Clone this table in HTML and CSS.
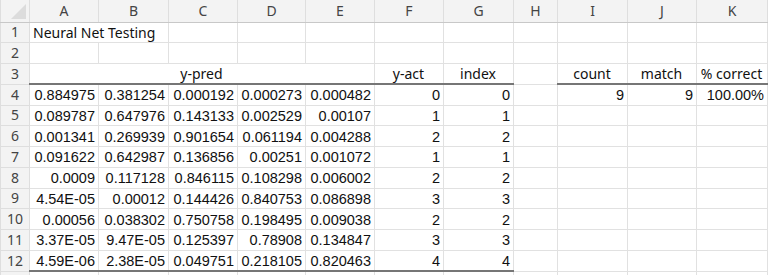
FILE: index.html
```html
<!DOCTYPE html>
<html lang="en">
<head>
    <meta charset="UTF-8">
    <title>Neural Net Testing</title>
    <link rel="stylesheet" href="styles.css">
</head>
<body>
    <table class="sheet">
        <colgroup>
            <col class="c-row"><col class="c-69"><col class="c-70"><col class="c-69"><col class="c-68"><col class="c-69"><col class="c-69"><col class="c-70"><col class="c-44"><col class="c-70"><col class="c-69"><col class="c-71">
        </colgroup>
        <thead>
            <tr class="col-head">
                <th class="corner"><span class="tri"></span></th>
                <th>A</th><th>B</th><th>C</th><th>D</th><th>E</th><th>F</th><th>G</th><th>H</th><th>I</th><th>J</th><th>K</th>
            </tr>
        </thead>
        <tbody>
            <tr>
                <th>1</th>
                <td class="title" colspan="2">Neural Net Testing</td>
                <td></td><td></td><td></td><td></td><td></td><td></td><td></td><td></td><td></td>
            </tr>
            <tr>
                <th>2</th>
                <td></td><td></td><td></td><td></td><td></td><td></td><td></td><td></td><td></td><td></td><td></td>
            </tr>
            <tr class="labels">
                <th>3</th>
                <td class="lbl rule" colspan="5">y-pred</td>
                <td class="lbl rule">y-act</td>
                <td class="lbl rule">index</td>
                <td></td>
                <td class="lbl rule">count</td>
                <td class="lbl rule">match</td>
                <td class="lbl rule">% correct</td>
            </tr>
            <tr>
                <th>4</th>
                <td>0.884975</td><td>0.381254</td><td>0.000192</td><td>0.000273</td><td>0.000482</td><td>0</td><td>0</td>
                <td></td><td>9</td><td>9</td><td>100.00%</td>
            </tr>
            <tr>
                <th>5</th>
                <td>0.089787</td><td>0.647976</td><td>0.143133</td><td>0.002529</td><td>0.00107</td><td>1</td><td>1</td>
                <td></td><td></td><td></td><td></td>
            </tr>
            <tr>
                <th>6</th>
                <td>0.001341</td><td>0.269939</td><td>0.901654</td><td>0.061194</td><td>0.004288</td><td>2</td><td>2</td>
                <td></td><td></td><td></td><td></td>
            </tr>
            <tr>
                <th>7</th>
                <td>0.091622</td><td>0.642987</td><td>0.136856</td><td>0.00251</td><td>0.001072</td><td>1</td><td>1</td>
                <td></td><td></td><td></td><td></td>
            </tr>
            <tr>
                <th>8</th>
                <td>0.0009</td><td>0.117128</td><td>0.846115</td><td>0.108298</td><td>0.006002</td><td>2</td><td>2</td>
                <td></td><td></td><td></td><td></td>
            </tr>
            <tr>
                <th>9</th>
                <td>4.54E-05</td><td>0.00012</td><td>0.144426</td><td>0.840753</td><td>0.086898</td><td>3</td><td>3</td>
                <td></td><td></td><td></td><td></td>
            </tr>
            <tr>
                <th>10</th>
                <td>0.00056</td><td>0.038302</td><td>0.750758</td><td>0.198495</td><td>0.009038</td><td>2</td><td>2</td>
                <td></td><td></td><td></td><td></td>
            </tr>
            <tr>
                <th>11</th>
                <td>3.37E-05</td><td>9.47E-05</td><td>0.125397</td><td>0.78908</td><td>0.134847</td><td>3</td><td>3</td>
                <td></td><td></td><td></td><td></td>
            </tr>
            <tr class="last">
                <th>12</th>
                <td class="rule">4.59E-06</td><td class="rule">2.38E-05</td><td class="rule">0.049751</td><td class="rule">0.218105</td><td class="rule">0.820463</td><td class="rule">4</td><td class="rule">4</td>
                <td></td><td></td><td></td><td></td>
            </tr>
            <tr class="tail">
                <th></th>
                <td></td><td></td><td></td><td></td><td></td><td></td><td></td><td></td><td></td><td></td><td></td>
            </tr>
        </tbody>
    </table>
</body>
</html>
```

FILE: styles.css
```css
* {
    margin: 0;
    padding: 0;
    box-sizing: border-box;
}

body {
    background: #fff;
    width: 768px;
    height: 275px;
    overflow: hidden;
}

.sheet {
    table-layout: fixed;
    border-collapse: collapse;
    width: 768px;
    font-family: 'Liberation Sans', Arial, sans-serif;
    font-size: 14.5px;
    color: #111;
}

.c-row { width: 29px; }
.c-44 { width: 44px; }
.c-68 { width: 68px; }
.c-69 { width: 69px; }
.c-70 { width: 70px; }
.c-71 { width: 71px; }

.sheet td,
.sheet th {
    height: 20.75px;
    border: 1px solid #e1e1e1;
    white-space: nowrap;
    overflow: hidden;
    line-height: 18px;
}

.sheet td {
    text-align: right;
    padding: 1px 3px 0 2px;
}

.sheet th {
    font-family: 'Noto Sans', 'Open Sans', sans-serif;
    font-weight: 400;
    font-size: 14px;
    color: #444;
    background: #f3f3f3;
    text-align: center;
    border-color: #dedede;
}

.col-head th {
    height: 22px;
    border-top: none;
    border-bottom-color: #c8c8c8;
}

tbody th {
    border-left: none;
    border-right-color: #c8c8c8;
}

.corner {
    position: relative;
}

.tri {
    position: absolute;
    right: 3px;
    bottom: 3px;
    width: 0;
    height: 0;
    border-left: 15px solid transparent;
    border-bottom: 15px solid #dcdcdc;
}

.sheet td.title {
    text-align: left;
    font-family: 'Noto Sans', 'Open Sans', sans-serif;
    font-size: 14px;
    color: #111;
    padding-left: 3px;
}

.sheet td.lbl {
    text-align: center;
    font-family: 'Noto Sans', 'Open Sans', sans-serif;
    font-size: 14px;
    color: #111;
}

.sheet td.rule {
    border-bottom: 2px solid #767676;
}

.tail th,
.tail td {
    height: 10px;
}
```
